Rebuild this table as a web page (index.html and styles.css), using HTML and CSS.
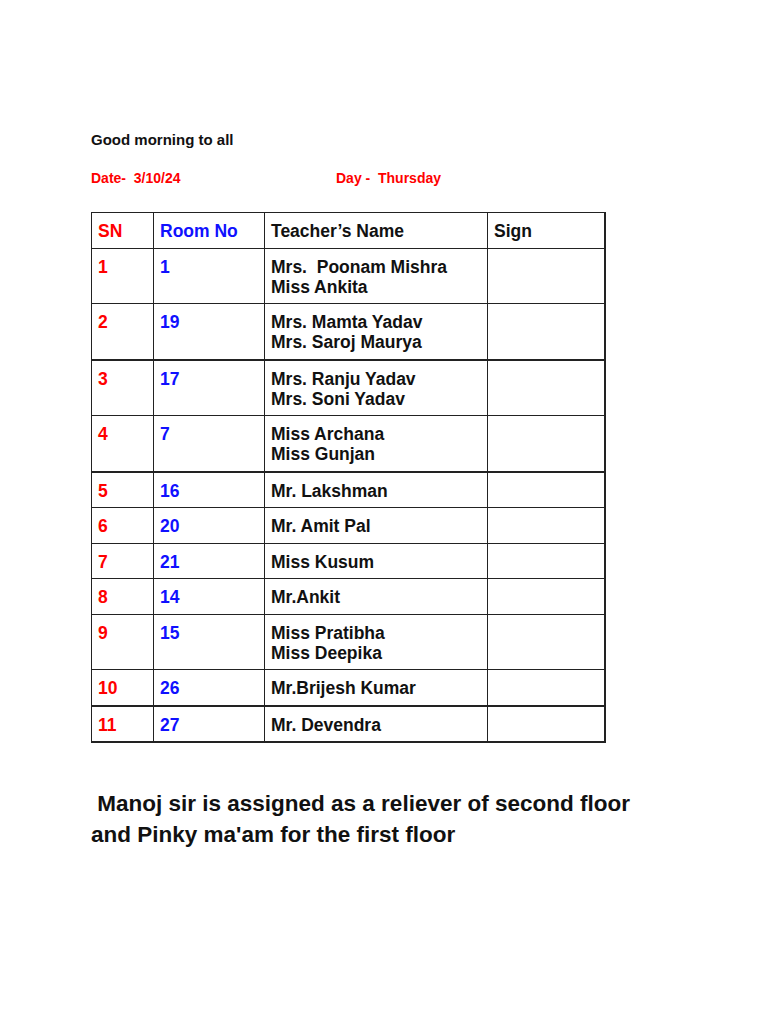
FILE: index.html
```html
<!DOCTYPE html>
<html>
<head>
<meta charset="utf-8">
<link rel="stylesheet" href="styles.css">
</head>
<body>
<div class="page">
  <p class="greeting">Good morning to all</p>
  <div class="dateline">
    <span class="date">Date-&nbsp; 3/10/24</span>
    <span class="day">Day -&nbsp; Thursday</span>
  </div>
  <table class="duty">
    <colgroup>
      <col class="c-sn"><col class="c-room"><col class="c-name"><col class="c-sign">
    </colgroup>
    <thead>
      <tr><th class="sn">SN</th><th class="room">Room No</th><th>Teacher’s Name</th><th>Sign</th></tr>
    </thead>
    <tbody>
      <tr><td class="sn">1</td><td class="room">1</td><td>Mrs.&nbsp; Poonam Mishra<br>Miss Ankita</td><td></td></tr>
      <tr><td class="sn">2</td><td class="room">19</td><td>Mrs. Mamta Yadav<br>Mrs. Saroj Maurya</td><td></td></tr>
      <tr class="thick"><td class="sn">3</td><td class="room">17</td><td>Mrs. Ranju Yadav<br>Mrs. Soni Yadav</td><td></td></tr>
      <tr><td class="sn">4</td><td class="room">7</td><td>Miss Archana<br>Miss Gunjan</td><td></td></tr>
      <tr class="thick"><td class="sn">5</td><td class="room">16</td><td>Mr. Lakshman</td><td></td></tr>
      <tr><td class="sn">6</td><td class="room">20</td><td>Mr. Amit Pal</td><td></td></tr>
      <tr><td class="sn">7</td><td class="room">21</td><td>Miss Kusum</td><td></td></tr>
      <tr><td class="sn">8</td><td class="room">14</td><td>Mr.Ankit</td><td></td></tr>
      <tr><td class="sn">9</td><td class="room">15</td><td>Miss Pratibha<br>Miss Deepika</td><td></td></tr>
      <tr><td class="sn">10</td><td class="room">26</td><td>Mr.Brijesh Kumar</td><td></td></tr>
      <tr class="thick last"><td class="sn">11</td><td class="room">27</td><td>Mr. Devendra</td><td></td></tr>
    </tbody>
  </table>
  <p class="note">&nbsp;Manoj sir is assigned as a reliever of second floor and Pinky ma'am for the first floor</p>
</div>
</body>
</html>
```
FILE: styles.css
```css
html, body {
  margin: 0;
  padding: 0;
  background: #ffffff;
}
body {
  font-family: "Liberation Sans", Arial, sans-serif;
  color: #111111;
}
.page {
  padding: 131px 0 0 91px;
}
.greeting {
  margin: 0;
  font-size: 15px;
  font-weight: bold;
  line-height: 18px;
}
.dateline {
  display: flex;
  margin-top: 21px;
  font-size: 14px;
  font-weight: bold;
  line-height: 16px;
  color: #ff0000;
}
.date {
  width: 245px;
}
.duty {
  margin-top: 26px;
  border-collapse: collapse;
  table-layout: fixed;
  width: 513px;
  font-size: 17.5px;
  font-weight: bold;
  line-height: 20px;
}
.c-sn { width: 62px; }
.c-room { width: 111px; }
.c-name { width: 223px; }
.c-sign { width: 117px; }
.duty th, .duty td {
  border: 1px solid #222222;
  padding: 8px 6px 6.5px 6px;
  text-align: left;
  vertical-align: top;
  font-weight: bold;
}
.duty th:last-child, .duty td:last-child {
  border-right: 2px solid #222222;
}
.duty tr.thick td {
  border-top: 2px solid #222222;
}
.duty tr.last td {
  border-bottom: 2px solid #222222;
}
.sn { color: #ff0000; }
.room { color: #1010ff; }
.note {
  margin: 45px 0 0 0;
  width: 560px;
  font-size: 22.5px;
  font-weight: bold;
  line-height: 31px;
}
```
